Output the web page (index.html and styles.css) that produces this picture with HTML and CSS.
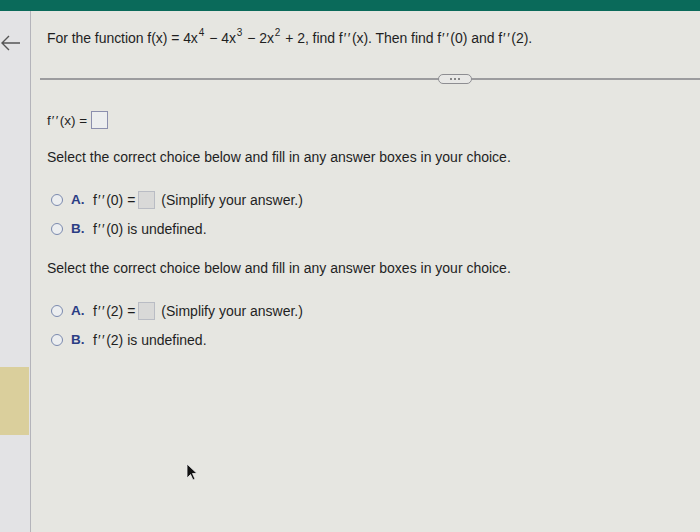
FILE: index.html
```html
<!DOCTYPE html>
<html>
<head>
<meta charset="utf-8">
<link rel="stylesheet" href="styles.css">
</head>
<body>
<div class="topbar"></div>
<div class="frame">
  <aside class="side">
    <svg class="back" width="22" height="16" viewBox="0 0 22 16"><path d="M20 8H2M9 1L2 8l7 7" fill="none" stroke="#555" stroke-width="1.4"/></svg>
    <div class="mark"></div>
  </aside>
  <main class="main">
    <p class="title">For the function f(x) = 4x<sup>4</sup> − 4x<sup>3</sup> − 2x<sup>2</sup> + 2, find f<span class="pr">′′</span>(x). Then find f<span class="pr">′′</span>(0) and f<span class="pr">′′</span>(2).</p>
    <div class="sep"><span class="pill"><i></i><i></i><i></i></span></div>
    <div class="content">
      <p class="ans"><span>f<span class="pr">′′</span>(x) =</span><span class="box white"></span></p>
      <p class="instr">Select the correct choice below and fill in any answer boxes in your choice.</p>
      <div class="choices">
        <div class="choice"><span class="radio"></span><b>A.</b><span>f<span class="pr">′′</span>(0) =</span><span class="box gray"></span><span>(Simplify your answer.)</span></div>
        <div class="choice"><span class="radio"></span><b>B.</b><span>f<span class="pr">′′</span>(0) is undefined.</span></div>
      </div>
      <p class="instr second">Select the correct choice below and fill in any answer boxes in your choice.</p>
      <div class="choices">
        <div class="choice"><span class="radio"></span><b>A.</b><span>f<span class="pr">′′</span>(2) =</span><span class="box gray"></span><span>(Simplify your answer.)</span></div>
        <div class="choice"><span class="radio"></span><b>B.</b><span>f<span class="pr">′′</span>(2) is undefined.</span></div>
      </div>
    </div>
    <svg class="cursor" width="12" height="18" viewBox="0 0 12 18"><path d="M1 1v14l3.5-3.5 2.5 5.5 2-1-2.5-5.5H11z" fill="#111" stroke="#eee" stroke-width="0.8"/></svg>
  </main>
</div>
</body>
</html>
```
FILE: styles.css
```css
* { box-sizing: border-box; }
html, body { margin: 0; height: 100%; }
body {
  background: #e5e5e0;
  font-family: "Liberation Sans", Arial, sans-serif;
  color: #1f1f1f;
  font-size: 14px;
  overflow: hidden;
}
.topbar { height: 11px; background: #0a6a5a; }
.frame { display: flex; height: 521px; }
.side {
  width: 31px;
  flex: none;
  background: #e3e3e5;
  border-right: 1px solid #b4b4ba;
  display: flex;
  flex-direction: column;
  align-items: flex-start;
}
.back { margin-top: 24px; margin-left: 0; }
.mark { margin-top: 316px; width: 29px; height: 68px; background: #dacf9c; }
.main { flex: 1; position: relative; background: #e6e6e1; }
.title { margin: 19px 0 0 16px; line-height: 16px; letter-spacing: -0.05px; }
.pr { letter-spacing: 1.5px; margin-left: 1px; }
sup { font-size: 10px; vertical-align: 7px; line-height: 0; margin-left: 1px; margin-right: 1px; }
.sep {
  margin: 32px 0 0 9px;
  height: 2px;
  background: #9c9c9e;
  position: relative;
}
.pill {
  position: absolute;
  left: 398px;
  top: -4px;
  width: 34px;
  height: 10px;
  border: 1.5px solid #8e8e92;
  border-radius: 5px;
  background: #e8e8e6;
  display: flex;
  align-items: center;
  justify-content: center;
  gap: 2px;
}
.pill i { width: 2px; height: 2px; background: #666; border-radius: 50%; }
.content { padding-left: 16px; }
.ans { margin: 31px 0 0 0; display: flex; align-items: center; gap: 4px; font-size: 13.5px; height: 18px; }
.box { display: inline-block; width: 17px; height: 18px; }
.box.white { border: 1.5px solid #8b8fae; background: #eceeef; }
.box.gray { border: 1px solid #b9bcc4; background: #d9d9d8; }
.instr { margin: 20px 0 0 0; line-height: 16px; }
.choices { margin: 25px 0 0 4px; display: flex; flex-direction: column; gap: 10px; }
.choice { display: flex; align-items: center; height: 19px; font-size: 14px; }
.radio {
  width: 12px; height: 12px; border-radius: 50%;
  border: 1.5px solid #7b8aae; background: #eceef0;
  margin-right: 8px;
}
.choice b { color: #2b3d84; font-size: 13.5px; width: 22px; }
.choice .box { margin: 0 6px 0 3px; }
.instr.second { margin-top: 22px; }
.cursor { position: absolute; left: 155px; top: 452px; }
```
